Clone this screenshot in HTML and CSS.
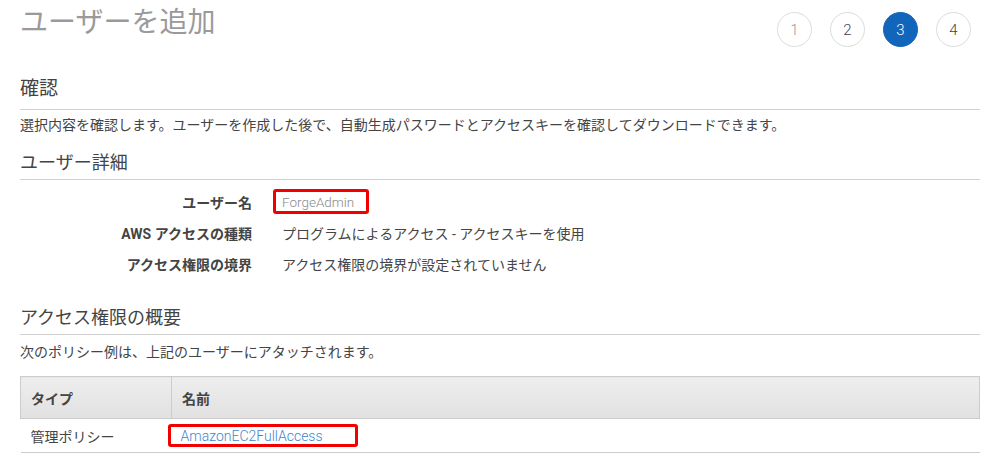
FILE: index.html
```html
<!DOCTYPE html>
<html lang="ja">
<head>
<meta charset="utf-8">
<title>ユーザーを追加</title>
<link rel="stylesheet" href="styles.css">
</head>
<body>
<div class="page">
  <header class="top">
    <h1 class="title">ユーザーを追加</h1>
    <ol class="steps">
      <li class="step step-done">1</li>
      <li class="step">2</li>
      <li class="step step-active">3</li>
      <li class="step">4</li>
    </ol>
  </header>

  <section class="sec sec-review">
    <h2 class="sec-title sec-title-first">確認</h2>
    <p class="desc">選択内容を確認します。ユーザーを作成した後で、自動生成パスワードとアクセスキーを確認してダウンロードできます。</p>
  </section>

  <section class="sec sec-details">
    <h2 class="sec-title">ユーザー詳細</h2>
    <dl class="details">
      <dt class="dt">ユーザー名</dt>
      <dd class="dd"><span class="mark mark-user">ForgeAdmin</span></dd>
      <dt class="dt">AWS アクセスの種類</dt>
      <dd class="dd">プログラムによるアクセス - アクセスキーを使用</dd>
      <dt class="dt">アクセス権限の境界</dt>
      <dd class="dd">アクセス権限の境界が設定されていません</dd>
    </dl>
  </section>

  <section class="sec sec-perm">
    <h2 class="sec-title">アクセス権限の概要</h2>
    <p class="desc desc-perm">次のポリシー例は、上記のユーザーにアタッチされます。</p>
    <table class="tbl">
      <thead>
        <tr><th class="th th-type">タイプ</th><th class="th">名前</th></tr>
      </thead>
      <tbody>
        <tr><td class="td">管理ポリシー</td><td class="td td-name"><span class="mark mark-policy"><a class="link" href="#">AmazonEC2FullAccess</a></span></td></tr>
      </tbody>
    </table>
  </section>
</div>
</body>
</html>
```

FILE: styles.css
```css
* { box-sizing: border-box; }
html, body { margin: 0; padding: 0; background: #fff; }
body {
  font-family: Roboto, "Noto Sans CJK JP", "Liberation Sans", sans-serif;
  color: #444;
  font-size: 14px;
}
.page {
  width: 992px;
  padding: 0 12px 0 20px;
}
.top {
  display: flex;
  justify-content: space-between;
  align-items: flex-start;
  height: 47px;
}
.title {
  margin: 0;
  font-size: 28px;
  line-height: 46px;
  font-weight: 400;
  color: #9a9a9a;
}
.steps {
  list-style: none;
  margin: 12px 9px 0 0;
  padding: 0;
  display: flex;
  gap: 18px;
}
.step {
  width: 35px;
  height: 35px;
  border-radius: 50%;
  border: 1px solid #dcdcdc;
  display: flex;
  align-items: center;
  justify-content: center;
  font-family: Roboto, sans-serif;
  font-weight: 300;
  font-size: 15px;
  color: #444;
}
.step-done { color: #999; }
.step-active {
  background: #1166bb;
  border-color: #1166bb;
  color: #fff;
}
.sec-title {
  margin: 14px 0 0;
  font-size: 18px;
  line-height: 28px;
  font-weight: 400;
  color: #444;
  padding-bottom: 2px;
  border-bottom: 1px solid #d0d0d0;
}
.sec-title-first {
  margin-top: 28px;
  padding-bottom: 6px;
  font-size: 19px;
}
.desc {
  margin: 5px 0 0;
  line-height: 20px;
  font-size: 14px;
}
.desc-perm { margin-top: 7px; }
.details {
  margin: 6px 0 0;
  display: grid;
  grid-template-columns: 232px 1fr;
  grid-auto-rows: 31px;
  column-gap: 30px;
  align-items: center;
}
.dt {
  font-weight: 700;
  text-align: right;
  margin: 0;
}
.dd { margin: 0; }
.mark {
  display: inline-flex;
  align-items: center;
  border: 3px solid #f20000;
  border-radius: 3px;
}
.mark-user {
  width: 96px;
  height: 25px;
  margin-left: -9px;
  padding-left: 6px;
  color: #8a8a8a;
  font-size: 13.5px;
  font-weight: 300;
}
.sec-perm .sec-title { margin-top: 25px; }
.tbl {
  margin-top: 14px;
  width: 960px;
  border-collapse: collapse;
}
.th {
  height: 42px;
  text-align: left;
  padding: 0 10px;
  font-weight: 700;
  background: linear-gradient(#eeeeee, #e1e1e1);
  border: 1px solid #cccccc;
}
.th-type { width: 151px; }
.td {
  height: 34px;
  padding: 0 10px;
  border-bottom: 1px solid #cccccc;
}
.td-name { padding-left: 9px; }
.mark-policy {
  width: 190px;
  height: 23px;
  margin-left: -13px;
  padding-left: 10px;
}
.link {
  color: #3f86d0;
  text-decoration: none;
  font-size: 14px;
  font-weight: 300;
}
```
